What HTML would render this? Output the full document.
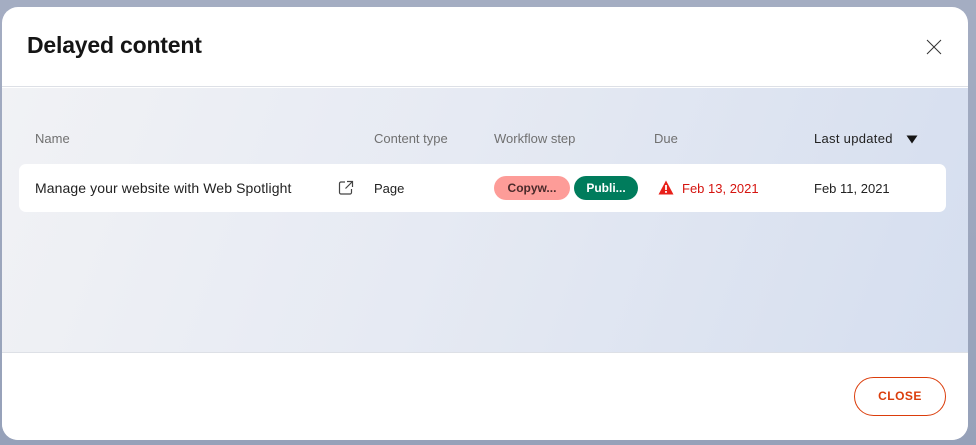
<!DOCTYPE html>
<html><head><meta charset="utf-8"><style>
*{margin:0;padding:0;box-sizing:border-box}
body{width:976px;height:445px;overflow:hidden;background:#98a4bc;font-family:"Liberation Sans",sans-serif;position:relative}
.bgtop{position:absolute;left:0;top:0;width:976px;height:445px;background:linear-gradient(#a4adc2,#96a1b9)}
.modal{position:absolute;left:2px;top:7px;width:966px;height:433px;background:#fff;border-radius:16px;overflow:hidden}
.hdr{height:80px;border-bottom:1px solid #dde0e6;position:relative}
.hdr h1{position:absolute;left:25px;top:25px;font-size:23px;font-weight:bold;color:#151515;letter-spacing:-0.2px}
.x{position:absolute;left:924px;top:32px}
.body{position:absolute;top:81px;left:0;width:966px;height:264px;background:linear-gradient(110deg,#f1f2f5 0%,#e6eaf3 45%,#d5deef 100%)}
.th{position:absolute;top:43px;font-size:13px;color:#707070}
.row{position:absolute;left:17px;top:76px;width:927px;height:48px;background:#fff;border-radius:7px}
.t{position:absolute;top:17px;font-size:13px;color:#222}
.pill{position:absolute;top:12px;height:24px;border-radius:12px;font-size:12px;font-weight:bold;line-height:24px;text-align:center}
.ftr{position:absolute;top:345px;left:0;width:966px;height:88px;border-top:1px solid #dde0e6;background:#fff}
.btn{position:absolute;left:852px;top:24px;width:92px;height:39px;border:1.5px solid #db3d0b;border-radius:20px;color:#db3d0b;font-size:12px;font-weight:bold;text-align:center;line-height:36px;letter-spacing:0.5px}
</style></head><body>
<div class="bgtop"></div>
<div class="modal">
 <div class="hdr"><h1>Delayed content</h1>
  <svg class="x" width="16" height="16" viewBox="0 0 16 16"><path d="M1 1L15 15M15 1L1 15" stroke="#333" stroke-width="1"/></svg></div>
 <div class="body">
  <div class="th" style="left:33px">Name</div>
  <div class="th" style="left:372px">Content type</div>
  <div class="th" style="left:492px">Workflow step</div>
  <div class="th" style="left:652px">Due</div>
  <div class="th" style="left:812px;color:#222;letter-spacing:0.3px">Last updated</div>
  <svg style="position:absolute;left:904px;top:47px" width="12" height="9" viewBox="0 0 12 9"><path d="M0.5 0.5H11.5L6 8.5Z" fill="#151515"/></svg>
  <div class="row">
   <div class="t" style="left:16px;font-size:14px;top:16px;letter-spacing:0.1px">Manage your website with Web Spotlight</div>
   <svg style="position:absolute;left:319px;top:16px" width="16" height="16" viewBox="0 0 16 16" fill="none" stroke="#444" stroke-width="1.2"><path d="M7 2H3a1.5 1.5 0 0 0-1.5 1.5v9A1.5 1.5 0 0 0 3 14h9a1.5 1.5 0 0 0 1.5-1.5V9"/><path d="M9 1.5h5.5V7M14.5 1.5L7.5 8.5"/></svg>
   <div class="t" style="left:355px">Page</div>
   <div class="pill" style="left:475px;width:76px;background:#fd9c98;color:#4a2a2a">Copyw...</div>
   <div class="pill" style="left:555px;width:64px;background:#007c5c;color:#fff">Publi...</div>
   <svg style="position:absolute;left:639px;top:16px" width="16" height="15" viewBox="0 0 16 15"><path d="M8 0.5L15.5 14.5H0.5Z" fill="#e8201a"/><rect x="7.1" y="5" width="1.8" height="5" fill="#fff"/><rect x="7.1" y="11" width="1.8" height="1.8" fill="#fff"/></svg>
   <div class="t" style="left:663px;color:#d5140f">Feb 13, 2021</div>
   <div class="t" style="left:795px">Feb 11, 2021</div>
  </div>
 </div>
 <div class="ftr"><div class="btn">CLOSE</div></div>
</div>
</body></html>
